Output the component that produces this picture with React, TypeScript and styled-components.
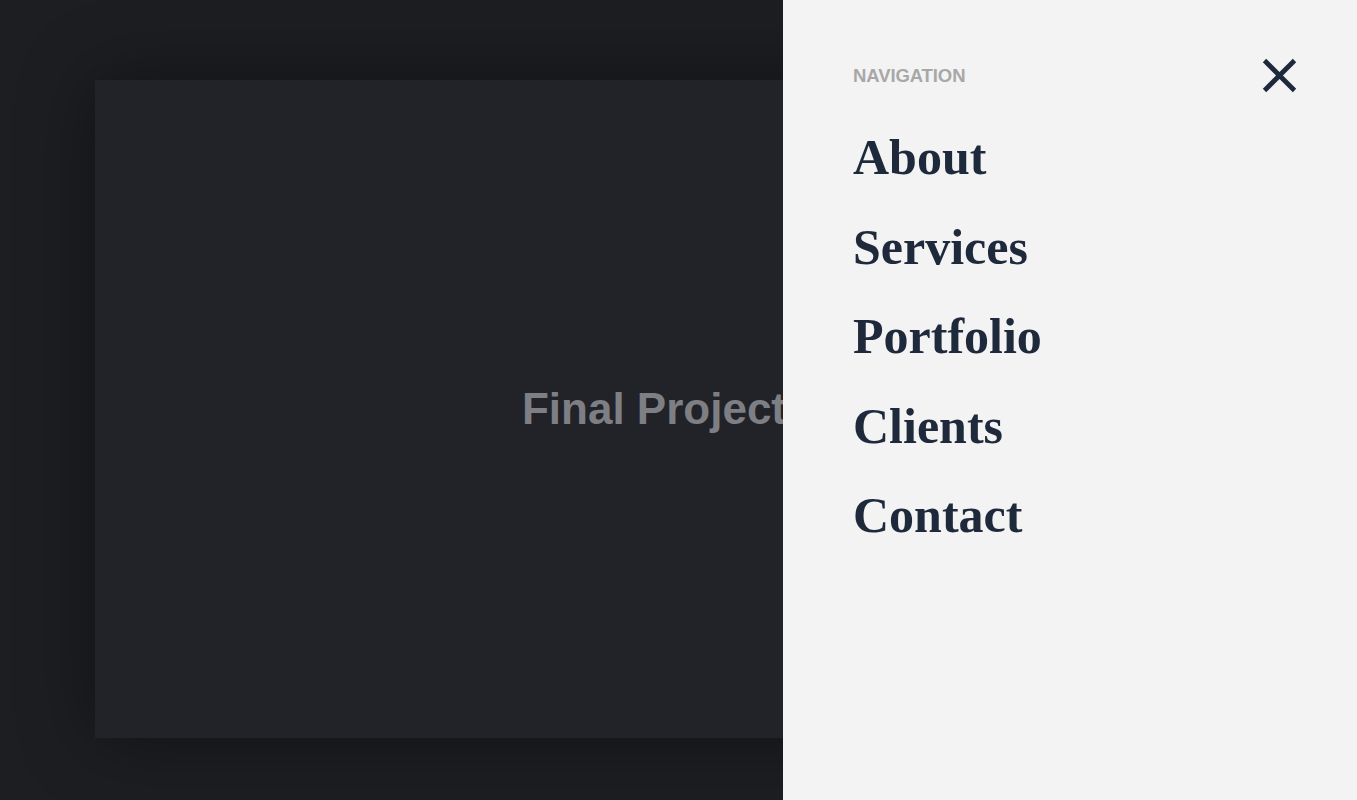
import React from "react";
import styled, { createGlobalStyle } from "styled-components";

const GlobalStyle = createGlobalStyle`
  html, body {
    margin: 0;
    padding: 0;
    background: #1d1e22;
    overflow: hidden;
  }
  * {
    box-sizing: border-box;
  }
`;

const Stage = styled.div`
  position: relative;
  width: 1357px;
  height: 800px;
  padding: 80px 0 0 95px;
  background: #1d1e22;
  font-family: "Liberation Sans", Arial, sans-serif;
`;

const Card = styled.section`
  width: 1118px;
  height: 658px;
  background: #222328;
  box-shadow: 0 0 70px rgba(0, 0, 0, 0.4);
  display: flex;
  align-items: center;
  justify-content: center;
`;

const CardTitle = styled.h2`
  margin: 0;
  font-size: 44px;
  font-weight: 700;
  color: #7e7f84;
`;

/* drawer overlays the page content */
const Drawer = styled.aside`
  position: absolute;
  top: 0;
  right: 0;
  width: 574px;
  height: 800px;
  background: #f3f3f3;
  padding: 58px 60px 0 70px;
  display: flex;
  flex-direction: column;
`;

const DrawerHeader = styled.div`
  display: flex;
  justify-content: space-between;
  align-items: center;
  height: 35px;
`;

const Label = styled.span`
  font-family: "Liberation Sans", Arial, sans-serif;
  font-size: 18.5px;
  font-weight: 700;
  color: #a8a8a8;
  letter-spacing: -0.1px;
`;

const CloseButton = styled.button`
  width: 35px;
  height: 35px;
  padding: 0;
  border: none;
  background: none;
  cursor: pointer;
  display: flex;
`;

const Menu = styled.ul`
  list-style: none;
  margin: 20px 0 0;
  padding: 0;
`;

const MenuItem = styled.li`
  font-family: "Liberation Serif", "Times New Roman", serif;
  font-size: 50px;
  font-weight: 700;
  line-height: 89.5px;
  color: #1e293b;
  cursor: pointer;
`;

const items = ["About", "Services", "Portfolio", "Clients", "Contact"];

const App: React.FC = () => {
  return (
    <>
      <GlobalStyle />
      <Stage>
        <Card>
          <CardTitle>Final Project</CardTitle>
        </Card>
        <Drawer>
          <DrawerHeader>
            <Label>NAVIGATION</Label>
            <CloseButton aria-label="Close">
              <svg width="35" height="35" viewBox="0 0 35 35">
                <path
                  d="M2.5 2.5 L32.5 32.5 M32.5 2.5 L2.5 32.5"
                  stroke="#1e293b"
                  strokeWidth="4.8"
                  fill="none"
                />
              </svg>
            </CloseButton>
          </DrawerHeader>
          <Menu>
            {items.map((item) => (
              <MenuItem key={item}>{item}</MenuItem>
            ))}
          </Menu>
        </Drawer>
      </Stage>
    </>
  );
};

export default App;
